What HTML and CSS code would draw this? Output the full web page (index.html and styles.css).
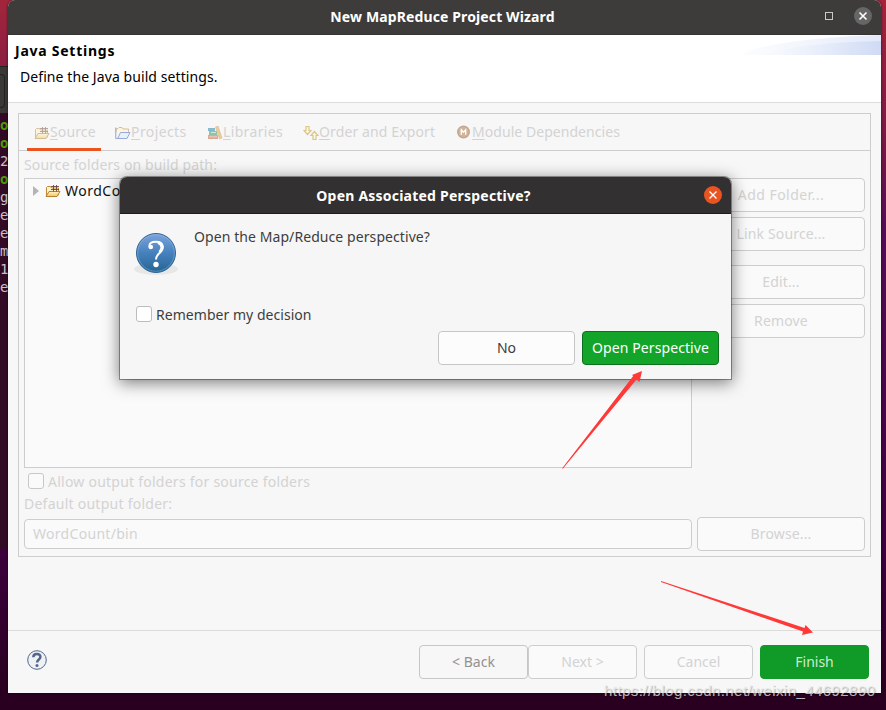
FILE: index.html
```
<!DOCTYPE html>
<html lang="en">
  <head>
    <meta charset="UTF-8" />
    <meta name="viewport" content="width=device-width, initial-scale=1.0" />
    <title>New MapReduce Project Wizard</title>
    <link rel="stylesheet" href="styles.css">
  </head>
  <body>
    <svg width="0" height="0" class="defs">
      <defs>
        <linearGradient id="folderFill" x1="0" y1="0" x2="0" y2="1">
          <stop offset="0" stop-color="#fff3c0" />
          <stop offset="1" stop-color="#f3c36a" />
        </linearGradient>
        <linearGradient id="blueBall" x1="0" y1="0" x2="0" y2="1">
          <stop offset="0" stop-color="#7da3dc" />
          <stop offset="0.5" stop-color="#4681bd" />
          <stop offset="1" stop-color="#246594" />
        </linearGradient>
        <linearGradient id="bannerFill" x1="0" y1="0" x2="1" y2="0">
          <stop offset="0" stop-color="#fbfcfe" />
          <stop offset="0.5" stop-color="#e8eefa" />
          <stop offset="1" stop-color="#cfdaf4" />
        </linearGradient>
        <symbol id="sourceFolder" viewBox="0 0 16 14">
          <path d="M1.500 12V3.500L2.500 2.500h3l1 1.500h7v7z" fill="#fff2c8" stroke="#c08a3c" />
          <path d="M1 12.500L4 7.500h11L12 12.500z" fill="url(#folderFill)" stroke="#b98032" />
          <path d="M6 2.500h8M6 5.500h8M8.500 1v6.500M11.500 1v6.500" fill="none" stroke="#6b4542" stroke-width=".9" />
        </symbol>
      </defs>
    </svg>

    <div class="desktop">
      <div class="terminal">
        <div class="wallpaper-top"></div>
        <div class="terminal-bar"><div class="terminal-button"></div></div>
        <div class="terminal-text">
          <b>o</b><b>o</b><span>2</span><b>o</b><span>g</span><span>e</span><span>e</span><span>m</span><span>1</span><span>e</span>
        </div>
      </div>

      <div class="wizard">
        <div class="titlebar">
          <span class="titlebar-text">New MapReduce Project Wizard</span>
          <div class="window-buttons">
            <span class="maximize"></span>
            <span class="close">
              <svg width="18" height="18" viewBox="0 0 18 18"><path d="M5.500 5.500l7 7M12.500 5.500l-7 7" stroke="#fff" stroke-width="1.6" /></svg>
            </span>
          </div>
        </div>

        <div class="header">
          <h1>Java Settings</h1>
          <p>Define the Java build settings.</p>
          <svg class="banner" width="141" height="20" viewBox="0 0 141 20">
            <path d="M0 20C20 9 75 2 141 0V20z" fill="url(#bannerFill)" opacity="0.6" />
            <path d="M18 20C50 11 95 7 141 6V20z" fill="url(#bannerFill)" />
          </svg>
        </div>

        <div class="content">
          <div class="panel">
            <div class="tabs">
              <div class="tab tab-source active">
                <svg class="faded" width="16" height="14"><use href="#sourceFolder" /></svg><span><u>S</u>ource</span>
              </div>
              <div class="tab tab-projects">
                <svg class="faded" width="16" height="14" viewBox="0 0 16 14">
                  <path d="M1.500 11.500V2.500h1.500l1-1h3l1 1.500h5.500v4" fill="#fff5cc" stroke="#ba8540" />
                  <path d="M.7 1.500v11h11.300l3-6H5.500L3 12" fill="#d9ecff" stroke="#4060b8" />
                </svg><span><u>P</u>rojects</span>
              </div>
              <div class="tab tab-libraries">
                <svg class="faded" width="16" height="14" viewBox="0 0 16 14">
                  <path d="M1 2h7v3H1z" fill="#1780a0" />
                  <path d="M2 5h8v4H2z" fill="#21916b" />
                  <path d="M4 6.500h5" stroke="#b7dfb0" />
                  <path d="M1 9h10v4H1z" fill="#c65c38" />
                  <path d="M2 10.800h8" stroke="#e9aa88" />
                  <path d="M8.500 1L11 0l4 12-2.500 1z" fill="#e8a038" stroke="#b8792c" stroke-width=".6" />
                </svg><span><u>L</u>ibraries</span>
              </div>
              <div class="tab tab-order">
                <svg class="faded" width="16" height="16" viewBox="0 0 16 16">
                  <path d="M3 1.500h3v4h2L4.500 9.500 1 5.500h2z" fill="#fff8d8" stroke="#c49416" stroke-width="1.200" />
                  <path d="M10 14.500h3v-4h2L11.500 6.500 8 10.500h2z" fill="#fff8d8" stroke="#c49416" stroke-width="1.200" />
                </svg><span><u>O</u>rder and Export</span>
              </div>
              <div class="tab tab-module">
                <svg class="module-icon" width="15" height="16" viewBox="0 0 15 16">
                  <circle cx="6.500" cy="7" r="6.500" fill="#c7a78c" />
                  <circle cx="6.500" cy="7" r="5" fill="#d0b49d" />
                  <path d="M4.300 9.800V4.800L6.500 7.300l2.200-2.500V9.800" fill="none" stroke="#fff" stroke-width="1.300" />
                </svg><span><u>M</u>odule Dependencies</span>
              </div>
            </div>

            <div class="tab-page">
              <div class="path-label">Source folders on build path:</div>
              <div class="source-row">
                <div class="tree">
                  <div class="tree-item">
                    <span class="expander"></span>
                    <svg width="16" height="14"><use href="#sourceFolder" /></svg>
                    <span class="tree-text">WordCount/src</span>
                  </div>
                </div>
                <div class="side-buttons">
                  <button class="button disabled add-folder">Add Folder...</button>
                  <button class="button disabled">Link Source...</button>
                  <button class="button disabled gap-above">Edit...</button>
                  <button class="button disabled">Remove</button>
                </div>
              </div>
              <div class="allow-row">
                <span class="checkbox"></span>
                <span class="allow-text">Allow output folders for source folders</span>
              </div>
              <div class="output-label">Default output folder:</div>
              <div class="output-row">
                <div class="field">WordCount/bin</div>
                <button class="button disabled">Browse...</button>
              </div>
            </div>
          </div>
        </div>

        <div class="footer">
          <svg class="help" width="20" height="20" viewBox="0 0 20 20">
            <circle cx="10" cy="10" r="9.300" fill="#f0f1f3" stroke="#52678c" />
            <path d="M6.300 7.200C6.400 2.800 13.700 3 13.400 7.200c-.2 2.300-3.300 2.500-3.300 5.300" fill="none" stroke="#52678c" stroke-width="2.500" />
            <circle cx="10" cy="15.600" r="1.500" fill="#52678c" />
          </svg>
          <div class="footer-buttons">
            <button class="button back">&lt; Back</button>
            <button class="button disabled next">Next &gt;</button>
            <button class="button disabled cancel">Cancel</button>
            <button class="button finish">Finish</button>
          </div>
        </div>
      </div>

      <div class="dialog">
        <div class="dialog-title">
          <span class="dialog-title-text">Open Associated Perspective?</span>
          <span class="close dialog-close">
            <svg width="18" height="18" viewBox="0 0 18 18"><path d="M5.500 5.500l7 7M12.500 5.500l-7 7" stroke="#fff" stroke-width="1.400" /></svg>
          </span>
        </div>
        <div class="dialog-body">
          <div class="message">
            <svg width="46" height="46" viewBox="0 0 46 46">
              <ellipse cx="23" cy="38" rx="22" ry="6" fill="#000" opacity=".06" />
              <circle cx="23" cy="22" r="19.500" fill="url(#blueBall)" stroke="#2f6596" />
              <circle cx="23" cy="22" r="18.300" fill="none" stroke="#a5c2e5" stroke-opacity=".4" />
              <path d="M17 17C15 12 19 10.800 23 10.800c8.500 0 8 7.200 4 10.700-2.500 2.200-4 4-4 7" fill="none" stroke="#fff" stroke-width="2" />
              <circle cx="17.800" cy="16" r="2.300" fill="#fff" />
              <path d="M25 11.300c5.500 2 4.500 7.500 1.500 10" fill="none" stroke="#fff" stroke-width="3" />
              <circle cx="23" cy="33.500" r="2.700" fill="#fff" />
            </svg>
            <span class="message-text">Open the Map/Reduce perspective?</span>
          </div>
          <div class="remember">
            <span class="checkbox"></span>
            <span class="remember-text">Remember my decision</span>
          </div>
          <div class="dialog-buttons">
            <button class="button no">No</button>
            <button class="button open">Open Perspective</button>
          </div>
        </div>
      </div>

      <svg class="arrows" width="886" height="710" viewBox="0 0 886 710">
        <path d="M562 468.500L633.200 376 632 375 642 371 639.500 382 636.500 379.500 563 468.500z" fill="#ff3838" />
        <path d="M661 581L804.500 628 805.500 625 813 632.500 802 635 803 631.500 661 582z" fill="#ff3838" />
      </svg>
      <div class="watermark">https://blog.csdn.net/weixin_44692890</div>
    </div>
  </body>
</html>
```

FILE: styles.css
```
body {
  margin: 0;
  font-family: "Noto Sans", "Open Sans", sans-serif;
  font-size: 14px;
  color: #3d3d3d;
}

.defs {
  position: absolute;
}

.desktop {
  position: relative;
  width: 886px;
  height: 710px;
  overflow: hidden;
  display: flex;
  background: linear-gradient(#a9233b 0, #7e1a45 130px, #560c55 230px, #4b0649 390px, #3c003e 550px, #29001f 700px);
}

/* Terminal behind the wizard */
.terminal {
  width: 8px;
  height: 549px;
  overflow: hidden;
}

.wallpaper-top {
  height: 66px;
  background: linear-gradient(#a3253b, #8b1e43);
}

.terminal-bar {
  height: 47px;
  box-sizing: border-box;
  padding-top: 7px;
  background-color: #393836;
  border-top: 1px solid #222;
}

.terminal-button {
  width: 4px;
  height: 32px;
  border: 1px solid #222;
  border-left: none;
  border-radius: 0 4px 4px 0;
}

.terminal-text {
  height: 436px;
  padding-top: 3px;
  box-sizing: border-box;
  background-color: #330a26;
  color: #c9c3c8;
  font-family: "DejaVu Sans Mono", monospace;
  font-size: 14px;
  line-height: 18px;
}

.terminal-text b,
.terminal-text span {
  display: block;
}

.terminal-text b {
  color: #4e9a06;
}

/* Wizard window */
.wizard {
  width: 873px;
  height: 693px;
  display: flex;
  flex-direction: column;
  background-color: #f7f7f7;
  border-radius: 7px 7px 0 0;
  overflow: hidden;
  box-shadow: 0 0 3px rgba(0, 0, 0, 0.6);
}

.titlebar {
  height: 35px;
  display: grid;
  grid-template-columns: 1fr auto 1fr;
  align-items: center;
  padding-right: 9px;
  padding-left: 5px;
  background-color: #3d3c3a;
  border-bottom: 1px solid #353432;
  box-sizing: border-box;
}

.titlebar-text,
.dialog-title-text {
  grid-column: 2;
  color: #fff;
  font-weight: bold;
  white-space: nowrap;
}

.titlebar-text {
  letter-spacing: 0.12px;
  line-height: 32px;
}

.dialog-title-text {
  letter-spacing: 0.22px;
}

.window-buttons {
  display: flex;
  justify-content: flex-end;
  align-items: center;
  gap: 21px;
  padding-bottom: 2px;
}

.maximize {
  width: 6px;
  height: 6px;
  border: 1px solid #c8c8c8;
}

.close {
  width: 18px;
  height: 18px;
  border-radius: 50%;
  background-color: #666;
}

.close svg {
  display: block;
}

.header {
  position: relative;
  height: 67px;
  background-color: #fff;
  border-bottom: 1px solid #dcdcdc;
  color: #000;
}

.header h1 {
  margin: 0;
  padding: 6px 0 0 7px;
  font-size: 14px;
  line-height: 20px;
  letter-spacing: 0.75px;
}

.header p {
  margin: 0;
  padding: 6px 0 0 12px;
  line-height: 20px;
  letter-spacing: 0.08px;
}

.banner {
  position: absolute;
  top: 0;
  right: 0;
}

.content {
  height: 527px;
  box-sizing: border-box;
  padding: 10px 10px 0;
}

.panel {
  height: 444px;
  box-sizing: border-box;
  border: 1px solid #cdcdcd;
  color: #d3d3d3;
}

.tabs {
  height: 36px;
  display: flex;
  padding-left: 8px;
  border-bottom: 1px solid #cdcdcd;
}

.tab {
  display: flex;
  align-items: center;
  box-sizing: border-box;
  height: 37px;
  white-space: nowrap;
  line-height: 34px;
  letter-spacing: 0.12px;
}

.tab span {
  margin-bottom: 2px;
}

.tab-source {
  width: 74px;
  padding-left: 7px;
}

.tab.active {
  border-bottom: 3px solid #e95420;
  padding-top: 3px;
}

.tab u {
  text-decoration-thickness: 1px;
  text-underline-offset: 2px;
}

.tab-projects {
  width: 92px;
  padding-left: 14px;
  letter-spacing: 0.4px;
}

.tab-libraries {
  width: 97px;
  padding-left: 14px;
  letter-spacing: 0.35px;
}

.tab-order {
  width: 153px;
  padding-left: 13px;
}

.tab-module {
  padding-left: 14px;
  letter-spacing: 0.05px;
}

.faded {
  opacity: 0.5;
}

.tab-page {
  padding: 3px 5px 0;
}

.path-label {
  height: 24px;
  line-height: 21px;
  letter-spacing: 0.12px;
}

.source-row {
  display: flex;
  gap: 5px;
}

.tree {
  width: 668px;
  height: 290px;
  box-sizing: border-box;
  border: 1px solid #cdcdcd;
  background-color: #fafafa;
}

.tree-item {
  display: flex;
  align-items: center;
  height: 24px;
  padding-left: 8px;
  color: #111;
}

.expander {
  border-left: 6px solid #b5b5b5;
  border-top: 5px solid transparent;
  border-bottom: 5px solid transparent;
  margin-right: 6px;
}

.tree-text {
  margin: 0 0 2px 4px;
  letter-spacing: 0.5px;
}

.side-buttons {
  width: 168px;
  display: flex;
  flex-direction: column;
  gap: 5px;
}

.button {
  height: 34px;
  box-sizing: border-box;
  padding: 0;
  border: 1px solid #c6c6c6;
  border-radius: 4px;
  background-color: #fcfcfc;
  color: #3d3d3d;
  font-family: inherit;
  font-size: 14px;
  line-height: 20px;
}

.button.disabled {
  border-color: #cdcdcd;
  background-color: #fafafa;
  color: #d3d3d3;
}

.side-buttons .button {
  letter-spacing: 0.15px;
}

.side-buttons .add-folder {
  letter-spacing: 0.45px;
}

.gap-above {
  margin-top: 9px;
}

.allow-row {
  display: flex;
  align-items: center;
  height: 26px;
  padding-left: 4px;
}

.checkbox {
  width: 16px;
  height: 16px;
  box-sizing: border-box;
  border: 1px solid #bdbdbd;
  border-radius: 3px;
  background-color: #fff;
}

.allow-row .checkbox {
  border-color: #c8c8c8;
  background-color: #fafafa;
}

.allow-text {
  margin-left: 4px;
  letter-spacing: 0.24px;
}

.output-label {
  height: 23px;
  line-height: 20px;
  letter-spacing: 0.25px;
}

.output-row {
  display: flex;
  align-items: center;
  gap: 5px;
}

.field {
  width: 668px;
  height: 30px;
  box-sizing: border-box;
  padding-left: 8px;
  border: 1px solid #cdcdcd;
  border-radius: 4px;
  background-color: #fafafa;
  line-height: 28px;
  letter-spacing: 0.3px;
}

.output-row .button {
  width: 168px;
  letter-spacing: 0.15px;
}

/* Footer */
.footer {
  flex: 1;
  box-sizing: border-box;
  display: flex;
  justify-content: space-between;
  align-items: flex-start;
  padding: 14px 12px 0 19px;
  border-top: 1px solid #dcdcdc;
}

.help {
  margin-top: 5px;
}

.footer-buttons {
  display: flex;
}

.footer-buttons .button {
  width: 109px;
}

.button.back {
  background-color: #f7f7f7;
  color: #929292;
}

.footer-buttons .cancel {
  margin: 0 7px;
}

.button.finish {
  border-color: #109a27;
  background-color: #109a27;
  color: #cdebd1;
}

/* Confirmation dialog, floats over the wizard */
.dialog {
  position: absolute;
  left: 120px;
  top: 177px;
  width: 611px;
  height: 202px;
  background-color: #f6f6f6;
  border-radius: 7px 7px 0 0;
  box-shadow: 0 0 0 1px rgba(0, 0, 0, 0.35), 0 3px 16px 1px rgba(0, 0, 0, 0.5);
}

.dialog-title {
  height: 37px;
  box-sizing: border-box;
  display: grid;
  grid-template-columns: 1fr auto 1fr;
  align-items: center;
  padding: 0 9px 0 5px;
  border-radius: 7px 7px 0 0;
  border-bottom: 1px solid #1d1c1c;
  background-color: #323030;
}

.dialog-close {
  justify-self: end;
  background-color: #e95420;
}

.dialog-body {
  padding: 0 12px 0 13px;
}

.message {
  display: flex;
  height: 92px;
}

.message svg {
  margin-top: 17px;
}

.message-text {
  margin: 13px 0 0 15px;
  line-height: 20px;
  letter-spacing: 0.08px;
}

.remember {
  display: flex;
  align-items: center;
  height: 16px;
  padding-left: 3px;
}

.remember-text {
  margin-left: 4px;
  letter-spacing: 0.04px;
}

.dialog-buttons {
  display: flex;
  justify-content: flex-end;
  gap: 7px;
  margin-top: 9px;
}

.dialog-buttons .button {
  width: 137px;
}

.button.open {
  border-color: #0c701d;
  background-color: #12a529;
  color: #fff;
  letter-spacing: 0.1px;
}

.arrows {
  position: absolute;
  left: 0;
  top: 0;
}

.watermark {
  position: absolute;
  left: 604px;
  top: 682px;
  font-family: "Liberation Sans", Arial, sans-serif;
  font-size: 15px;
  line-height: 18px;
  letter-spacing: 0.44px;
  white-space: nowrap;
  color: rgba(235, 235, 235, 0.75);
  text-shadow: 1px 1px 1px rgba(0, 0, 0, 0.3);
}
```
